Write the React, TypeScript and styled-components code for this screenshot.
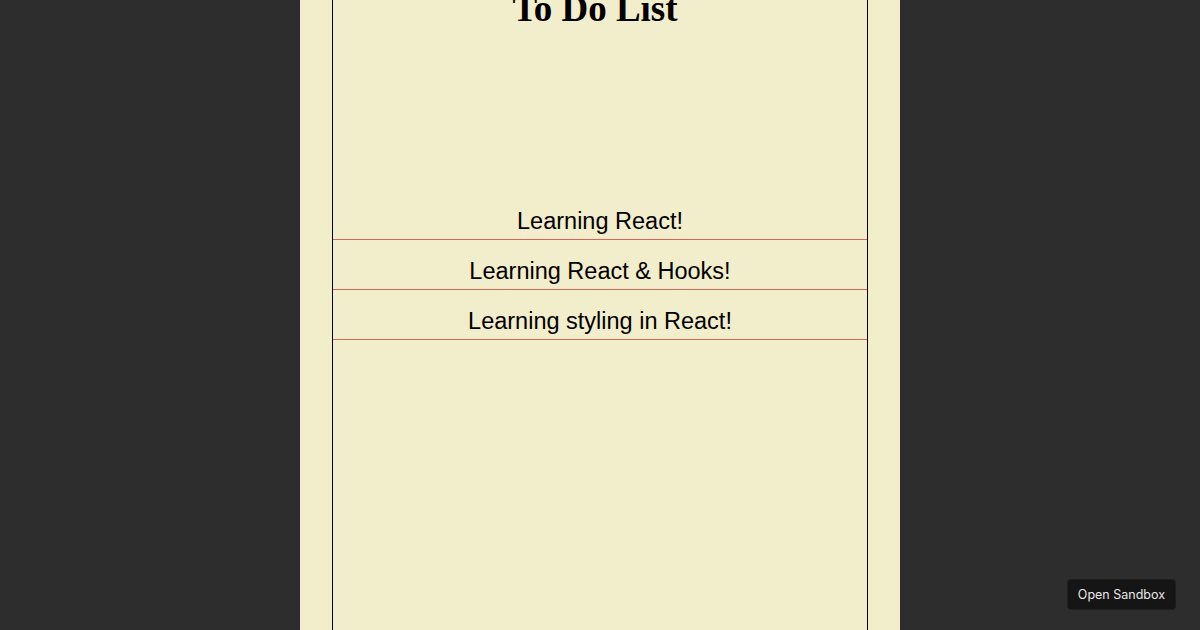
import React from 'react';
import styled, { createGlobalStyle } from 'styled-components';

const GlobalStyle = createGlobalStyle`
  html, body {
    margin: 0;
    padding: 0;
    height: 100%;
    background: #2d2d2d;
    overflow: hidden;
  }
  #root {
    height: 100%;
  }
`;

const Page = styled.div`
  display: flex;
  justify-content: center;
  height: 100vh;
`;

const Paper = styled.div`
  width: 600px;
  height: 100%;
  background: #f2edcb;
  display: flex;
  flex-direction: column;
`;

const Sheet = styled.div`
  flex: 1;
  margin: 0 32px;
  border-left: 1px solid #000;
  border-right: 1px solid #000;
  display: flex;
  flex-direction: column;
`;

const Title = styled.h1`
  margin: -9px 0 0;
  padding-right: 10px;
  font-family: 'Liberation Serif', 'Times New Roman', serif;
  font-size: 37px;
  line-height: 36px;
  font-weight: bold;
  text-align: center;
  color: #000;
`;

const List = styled.ul`
  list-style: none;
  margin: 0;
  padding: 163px 0 0;
`;

const Item = styled.li`
  padding: 19px 0 6px;
  line-height: 24px;
  border-bottom: 1px solid #d9665c;
  font-family: 'Liberation Sans', Arial, sans-serif;
  font-size: 23.5px;
  text-align: center;
  color: #000;
`;

const SandboxButton = styled.button`
  position: fixed;
  right: 24px;
  bottom: 20px;
  height: 31px;
  padding: 0 10px;
  background: #151515;
  color: #e8e8e8;
  border: 1px solid #1e1e1e;
  border-radius: 4px;
  font-family: Inter, 'Liberation Sans', sans-serif;
  font-size: 12.5px;
  cursor: pointer;
`;

const todos = [
  'Learning React!',
  'Learning React & Hooks!',
  'Learning styling in React!',
];

export default function App() {
  return (
    <>
      <GlobalStyle />
      <Page>
        <Paper>
          <Sheet>
            <Title>To Do List</Title>
            <List>
              {todos.map((todo) => (
                <Item key={todo}>{todo}</Item>
              ))}
            </List>
          </Sheet>
        </Paper>
      </Page>
      <SandboxButton>Open Sandbox</SandboxButton>
    </>
  );
}
